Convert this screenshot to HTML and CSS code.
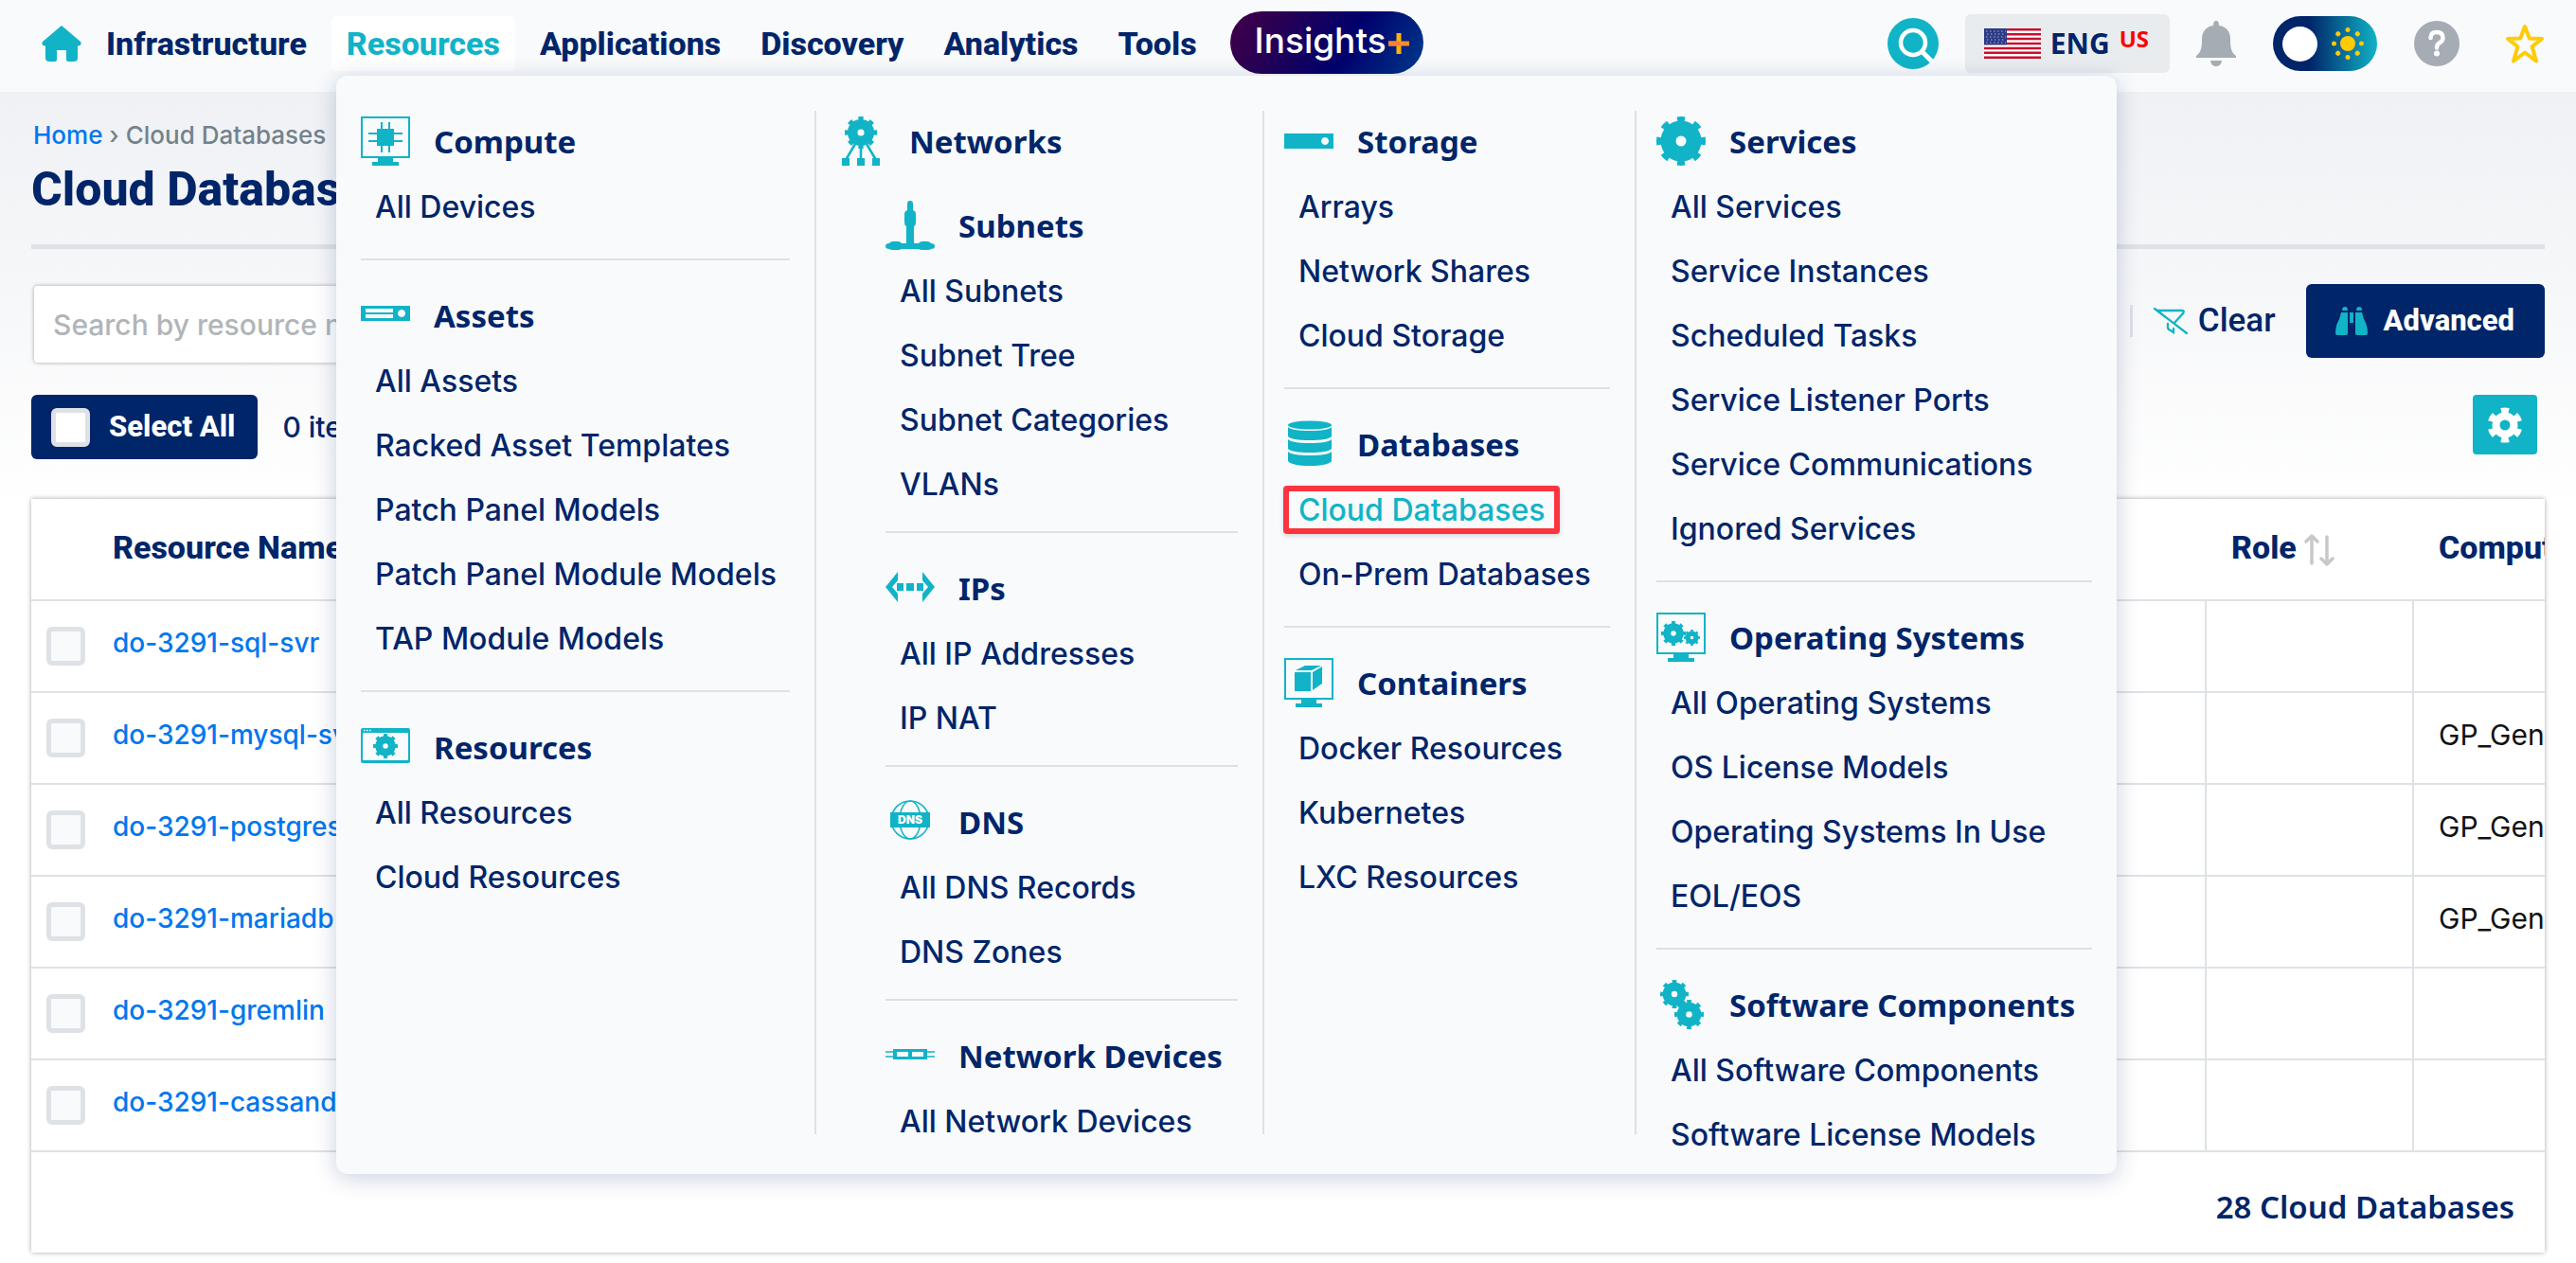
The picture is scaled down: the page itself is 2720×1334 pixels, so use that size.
FILE: index.html
```html
<!DOCTYPE html>
<html lang="en">
<head>
	<meta charset="utf-8">
	<title>Cloud Databases</title>
	<link rel="stylesheet" href="styles.css">
</head>
<body>

	<!-- shared icons -->
	<svg class="sprite" width="0" height="0" aria-hidden="true">
		<symbol id="gear" viewBox="0 0 52 52">
			<circle cx="26" cy="26" r="13.5" fill="none" stroke="currentColor" stroke-width="16"/>
			<circle cx="26" cy="26" r="22.5" fill="none" stroke="currentColor" stroke-width="7" pathLength="16" stroke-dasharray=".9 1.1" stroke-dashoffset=".45"/>
		</symbol>
		<symbol id="screen" viewBox="0 0 52 52">
			<path d="M0 0h52v44H34v4h6v4H12v-4h6v-4H0zM2 2v40h48V2z" fill="currentColor" fill-rule="evenodd"/>
		</symbol>
	</svg>

	<header class="topbar">
		<nav class="main-nav">
			<a class="home" href="#" aria-label="Home">
				<svg width="42" height="38" viewBox="0 0 42 38"><path d="M21 0 41 17q2 4-3 4.500V34q0 4-4 4h-6q-2 0-2-2V26H16v10q0 2-2 2H8q-4 0-4-4V21.500Q-1 21 1 17z" fill="currentColor"/></svg>
			</a>
			<a href="#">Infrastructure</a>
			<a class="active" href="#">Resources</a>
			<a href="#">Applications</a>
			<a href="#">Discovery</a>
			<a href="#">Analytics</a>
			<a href="#">Tools</a>
			<a class="insights" href="#">Insights<svg width="22" height="22" viewBox="0 0 22 22"><path d="M0 11h22" stroke="#ff8a2b" stroke-width="5"/><path d="M11 0v22" stroke="#ffb300" stroke-width="5"/><path d="M0 11h13" stroke="#ff7f3a" stroke-width="5"/></svg></a>
		</nav>
		<div class="tools">
			<button class="icon-btn" aria-label="Search">
				<svg width="54" height="54" viewBox="0 0 54 54"><circle cx="27" cy="27" r="27" fill="#11b3c7"/><circle cx="27" cy="26" r="13" fill="none" stroke="#fff" stroke-width="4.500"/><path d="M36 35l12 12" stroke="#fff" stroke-width="5"/></svg>
			</button>
			<button class="lang">
				<svg width="60" height="32" viewBox="0 0 60 32">
					<path fill="#fff" d="M0 0h60v32H0z"/>
					<path d="M0 1.200h60M0 6.200h60M0 11.100h60M0 16h60M0 20.900h60M0 25.800h60M0 30.800h60" stroke="#c8102e" stroke-width="2.460"/>
					<path fill="#2b3a86" d="M0 0h24v17.300H0z"/>
					<path d="M2 3h21M3 6h20M2 9h21M3 12h20M2 15h21" stroke="#aab2d8" stroke-width="1.200" stroke-dasharray="1.500 2.500"/>
				</svg>
				<span>ENG</span><sup>US</sup>
			</button>
			<button class="icon-btn" aria-label="Notifications">
				<svg width="42" height="48" viewBox="0 0 42 48"><path d="M21 0q3 0 3 5c8 1 12 7 12 14 0 10 1 14 6 18v2H0v-2c5-4 6-8 6-18C6 12 10 6 18 5q0-5 3-5zM15 42h12q-1 6-6 6t-6-6z" fill="#a6acb4"/></svg>
			</button>
			<label class="theme">
				<input type="checkbox" aria-label="Light theme">
				<svg width="34" height="34" viewBox="0 0 34 34"><circle cx="17" cy="17" r="8" fill="#ffcb05"/><circle cx="17" cy="17" r="14.500" fill="none" stroke="#ffcb05" stroke-width="5" stroke-linecap="round" pathLength="80" stroke-dasharray=".1 9.900"/></svg>
			</label>
			<button class="icon-btn" aria-label="Help">
				<svg width="48" height="48" viewBox="0 0 48 48"><circle cx="24" cy="24" r="24" fill="#a6acb4"/><path d="M17.500 18q0-6 6.500-6t6.500 6q0 3.500-4 5.500-2.500 1.300-2.500 5" fill="none" stroke="#fff" stroke-width="4.500" stroke-linecap="round"/><circle cx="24" cy="34.500" r="3" fill="#fff"/></svg>
			</button>
			<button class="icon-btn star" aria-label="Favourite">
				<svg width="42" height="42" viewBox="0 0 42 42"><path d="M21 3l4.800 12.500L39 16 28.600 24.200 33 39.500 21 30.500 9 39.500l4.400-15.300L3 16l13.200-.5z" fill="none" stroke="#ffcb05" stroke-width="4" stroke-linejoin="round"/></svg>
			</button>
		</div>
	</header>

	<main class="page">
		<div class="breadcrumb"><a href="#">Home</a> › <span>Cloud Databases</span></div>
		<h1>Cloud Databases</h1>

		<div class="search-row">
			<input class="search" type="text" placeholder="Search by resource name" aria-label="Search by resource name">
			<button class="clear">
				<svg width="36" height="30" viewBox="0 0 36 30" fill="none" stroke="#11b3c7" stroke-width="2.300" stroke-linecap="round"><path d="M1 2l34 26M4 4h26q3 0 1 3l-9 10M15 18v4q0 2 3 3l3 2v-4"/></svg>
				Clear
			</button>
			<button class="advanced">
				<svg width="34" height="31" viewBox="0 0 34 31" fill="#11b3c7"><path d="M7 4q0-4 3-4t3 4zM22 4q0-4 3-4t3 4zM6 6h7v22q0 2-2 2H2q-2 0-2-2 0-8 4-15zM21 6h7l2 7q4 7 4 15 0 2-2 2h-9q-2 0-2-2zM15 6h4v11h-4z"/></svg>
				Advanced
			</button>
		</div>

		<div class="select-row">
			<label class="select-all"><input type="checkbox">Select All</label>
			<span class="count">0 items</span>
			<button class="settings" aria-label="Table settings">
				<svg width="36" height="38" viewBox="-18 -19 36 38" fill="none" stroke="#fff"><circle r="9.500" stroke-width="8"/><circle r="15" stroke-width="7" pathLength="12" stroke-dasharray="1 1" stroke-dashoffset="3.500"/></svg>
			</button>
		</div>

		<section class="card">
			<table>
				<colgroup>
					<col class="c-check"><col class="c-name"><col><col class="c-role"><col class="c-tier">
				</colgroup>
				<thead>
					<tr>
						<th></th>
						<th class="name">Resource Name</th>
						<th></th>
						<th>Role <svg width="32" height="34" viewBox="0 0 32 34" fill="none" stroke="#c8c8c8" stroke-width="3.500" stroke-linecap="round" stroke-linejoin="round"><path d="M8 31V3M2 8l6-6 6 6M24 3v28M18 26l6 6 6-6"/></svg></th>
						<th>Compute</th>
					</tr>
				</thead>
				<tbody>
					<tr><td><input type="checkbox" aria-label="do-3291-sql-svr"></td><td class="name"><a href="#">do-3291-sql-svr</a></td><td></td><td></td><td></td></tr>
					<tr><td><input type="checkbox" aria-label="do-3291-mysql-svr"></td><td class="name"><a href="#">do-3291-mysql-svr</a></td><td></td><td></td><td>GP_Gen</td></tr>
					<tr><td><input type="checkbox" aria-label="do-3291-postgres"></td><td class="name"><a href="#">do-3291-postgres</a></td><td></td><td></td><td>GP_Gen</td></tr>
					<tr><td><input type="checkbox" aria-label="do-3291-mariadb"></td><td class="name"><a href="#">do-3291-mariadb</a></td><td></td><td></td><td>GP_Gen</td></tr>
					<tr><td><input type="checkbox" aria-label="do-3291-gremlin"></td><td class="name"><a href="#">do-3291-gremlin</a></td><td></td><td></td><td></td></tr>
					<tr><td><input type="checkbox" aria-label="do-3291-cassandra"></td><td class="name"><a href="#">do-3291-cassandra</a></td><td></td><td></td><td></td></tr>
				</tbody>
			</table>
			<div class="total">28 Cloud Databases</div>
		</section>
	</main>

	<div class="mega-menu">
		<div class="column">
			<section>
				<h2><svg viewBox="0 0 52 52"><use href="#screen"/><path d="M18 14h16v16H18zM22 6v32M30 6v32M8 18h36M8 26h36" fill="currentColor" stroke="currentColor" stroke-width="2"/></svg>Compute</h2>
				<ul>
					<li><a href="#">All Devices</a></li>
				</ul>
			</section>
			<section>
				<h2><svg viewBox="0 0 52 52"><path d="M0 16h52v16H0zM5 19v4h29v-4zM5 25v4h29v-4zM43 20a4 4 0 1 0 .1 0z" fill="currentColor" fill-rule="evenodd"/></svg>Assets</h2>
				<ul>
					<li><a href="#">All Assets</a></li>
					<li><a href="#">Racked Asset Templates</a></li>
					<li><a href="#">Patch Panel Models</a></li>
					<li><a href="#">Patch Panel Module Models</a></li>
					<li><a href="#">TAP Module Models</a></li>
				</ul>
			</section>
			<section>
				<h2><svg viewBox="0 0 52 52"><path d="M2 6h48q2 0 2 2v33q0 2-2 2H2q-2 0-2-2V8q0-2 2-2zM2 11v29h48V11z" fill="currentColor" fill-rule="evenodd"/><path d="M3 8.500h8" stroke="#fff" stroke-width="1.500" stroke-dasharray="1.500 1.500"/><use href="#gear" x="13" y="12" width="26" height="26"/></svg>Resources</h2>
				<ul>
					<li><a href="#">All Resources</a></li>
					<li><a href="#">Cloud Resources</a></li>
				</ul>
			</section>
		</div>

		<div class="column">
			<h2><svg viewBox="0 0 52 52"><use href="#gear" x="9" y="0" width="34" height="34"/><path d="M26 32v14M20 29l-10 17M32 29l10 17" stroke="currentColor" stroke-width="2.500"/><path d="M6 44h8v8H6zM22 44h8v8h-8zM38 44h8v8h-8z" fill="currentColor"/></svg>Networks</h2>
			<div class="nested">
				<section>
					<h2><svg viewBox="0 0 52 52"><path d="M23 3q0-3 3-3t3 3v7q3 1 3 4v9q0 3-2 4v18h5q1-2 4-2h5q3 0 4 2 4 0 4 3t-4 3q-1 1-4 1h-5q-3 0-4-1H17q-1 1-4 1H8q-3 0-4-1-4 0-4-3t4-3q1-2 4-2h5q3 0 4 2h5V27q-2-1-2-4v-9q0-3 3-4z" fill="currentColor"/></svg>Subnets</h2>
					<ul>
						<li><a href="#">All Subnets</a></li>
						<li><a href="#">Subnet Tree</a></li>
						<li><a href="#">Subnet Categories</a></li>
						<li><a href="#">VLANs</a></li>
					</ul>
				</section>
				<section>
					<h2><svg viewBox="0 0 52 52"><path d="M13 9v9l-6 7 6 7v9L0 25zM39 9v9l6 7-6 7v9l13-16zM12 21h7v8h-7zM22 21h8v8h-8zM33 21h7v8h-7z" fill="currentColor"/></svg>IPs</h2>
					<ul>
						<li><a href="#">All IP Addresses</a></li>
						<li><a href="#">IP NAT</a></li>
					</ul>
				</section>
				<section>
					<h2><svg viewBox="0 0 52 52"><g fill="none" stroke="currentColor" stroke-width="1.500"><circle cx="26" cy="24" r="20"/><ellipse cx="26" cy="24" rx="11" ry="20"/></g><path d="M5 16h42v16H5z" fill="currentColor"/><text class="dns" x="26" y="28" text-anchor="middle">DNS</text></svg>DNS</h2>
					<ul>
						<li><a href="#">All DNS Records</a></li>
						<li><a href="#">DNS Zones</a></li>
					</ul>
				</section>
				<section>
					<h2><svg viewBox="0 0 52 52"><path d="M8 19h36v11H8zM12 22v5h12v-5zM28 22v5h12v-5z" fill="currentColor" fill-rule="evenodd"/><path d="M0 22h8M0 27h8M44 22h8M44 27h8" stroke="currentColor" stroke-width="1.500"/></svg>Network Devices</h2>
					<ul>
						<li><a href="#">All Network Devices</a></li>
					</ul>
				</section>
			</div>
		</div>

		<div class="column">
			<section>
				<h2><svg viewBox="0 0 52 52"><path d="M0 18h52v16H0zM43 22a4 4 0 1 0 .1 0z" fill="currentColor" fill-rule="evenodd"/></svg>Storage</h2>
				<ul>
					<li><a href="#">Arrays</a></li>
					<li><a href="#">Network Shares</a></li>
					<li><a href="#">Cloud Storage</a></li>
				</ul>
			</section>
			<section>
				<h2><svg viewBox="0 0 52 52"><g fill="currentColor"><ellipse cx="27" cy="6" rx="23" ry="4.500"/><path d="M4 8q4 4 23 4t23-4v10q-4 4-23 4T4 18zM4 21q4 4 23 4t23-4v10q-4 4-23 4T4 31zM4 34q4 4 23 4t23-4v10q-4 5-23 5T4 44z"/></g></svg>Databases</h2>
				<ul>
					<li><a class="current" href="#">Cloud Databases</a></li>
					<li><a href="#">On-Prem Databases</a></li>
				</ul>
			</section>
			<section>
				<h2><svg viewBox="0 0 52 52"><use href="#screen"/><path d="M11 15h17v20H11zM30 15l10-6v18l-10 7zM12 13l10-5h17l-10 5z" fill="currentColor"/></svg>Containers</h2>
				<ul>
					<li><a href="#">Docker Resources</a></li>
					<li><a href="#">Kubernetes</a></li>
					<li><a href="#">LXC Resources</a></li>
				</ul>
			</section>
		</div>

		<div class="column">
			<section>
				<h2><svg viewBox="0 0 52 52"><use href="#gear"/></svg>Services</h2>
				<ul>
					<li><a href="#">All Services</a></li>
					<li><a href="#">Service Instances</a></li>
					<li><a href="#">Scheduled Tasks</a></li>
					<li><a href="#">Service Listener Ports</a></li>
					<li><a href="#">Service Communications</a></li>
					<li><a href="#">Ignored Services</a></li>
				</ul>
			</section>
			<section>
				<h2><svg viewBox="0 0 52 52"><use href="#screen"/><use href="#gear" x="5" y="9" width="26" height="26"/><use href="#gear" x="29" y="18" width="17" height="17"/></svg>Operating Systems</h2>
				<ul>
					<li><a href="#">All Operating Systems</a></li>
					<li><a href="#">OS License Models</a></li>
					<li><a href="#">Operating Systems In Use</a></li>
					<li><a href="#">EOL/EOS</a></li>
				</ul>
			</section>
			<section>
				<h2><svg viewBox="0 0 52 52"><use href="#gear" x="4" y="0" width="30" height="30"/><use href="#gear" x="19" y="21" width="31" height="31"/></svg>Software Components</h2>
				<ul>
					<li><a href="#">All Software Components</a></li>
					<li><a href="#">Software License Models</a></li>
				</ul>
			</section>
		</div>
	</div>

</body>
</html>
```
FILE: styles.css
```css
* {
	box-sizing: border-box;
}
body {
	margin: 0;
	min-height: 100vh;
	background: #fff linear-gradient(#eff1f4 97px, #f6f7f9 300px, #fff 540px);
	color: #002569;
	font-family: Inter, "Open Sans", sans-serif;
	font-weight: 500;
	font-size: 28px;
	overflow-x: hidden;
}
a {
	color: inherit;
	text-decoration: none;
}
button {
	border: 0;
	padding: 0;
	background: none;
	color: inherit;
	font: inherit;
	cursor: pointer;
}
svg {
	display: block;
}
.sprite {
	position: absolute;
}

/* top bar */
.topbar {
	display: flex;
	align-items: center;
	justify-content: space-between;
	height: 97px;
	padding: 0 33px 5px 28px;
	background: #f8fafc;
}
.main-nav {
	display: flex;
	align-items: center;
	gap: 10px;
	font: 800 34px/58px Roboto, sans-serif;
}
.main-nav a {
	padding: 0 16px;
	border-radius: 6px;
}
.main-nav .home {
	padding-right: 0;
	color: #11b3c7;
}
.main-nav .active {
	background: #fff;
	color: #11b3c7;
}
.main-nav .insights {
	display: flex;
	align-items: center;
	gap: 2px;
	margin: 0 0 2px 9px;
	padding: 0 15px 4px 26px;
	border-radius: 33px;
	background: linear-gradient(120deg, #430045, #00006c 60%, #003a8c);
	color: #fff;
	font: 500 37px/62px Inter, sans-serif;
}
.insights svg {
	margin-top: 6px;
}
.tools {
	display: flex;
	align-items: center;
	gap: 28px;
}
.lang {
	display: flex;
	align-items: center;
	gap: 10px;
	height: 62px;
	padding: 0 22px 0 20px;
	border-radius: 6px;
	background: #e9ecef;
	font: 700 30px/40px "Noto Sans", sans-serif;
}
.lang sup {
	margin-top: -10px;
	color: #f00;
	font-size: 24px;
	line-height: 30px;
}
.theme {
	display: block;
	position: relative;
	margin: 0 11px;
}
.theme input {
	appearance: none;
	display: block;
	width: 110px;
	height: 58px;
	margin: 0;
	padding: 11px 10px;
	border-radius: 29px;
	background: linear-gradient(90deg, #002569 35%, #11b3c7);
}
.theme input::before {
	content: "";
	display: block;
	width: 37px;
	height: 37px;
	border-radius: 50%;
	background: #fff;
}
.theme svg {
	position: absolute;
	top: 12px;
	right: 14px;
}
.star {
	margin-left: 20px;
}

/* page */
.page {
	padding: 26px 33px 10px;
}
.breadcrumb {
	padding-left: 2px;
	color: #73828c;
	font-size: 26px;
	line-height: 40px;
}
.breadcrumb a {
	color: #0077ee;
}
h1 {
	margin: 7px 0 37px;
	padding-bottom: 28px;
	border-bottom: 5px solid #dee2e6;
	font: 800 50px/60px Roboto, sans-serif;
}
.search-row {
	display: flex;
	align-items: flex-start;
}
.select-row {
	display: flex;
	align-items: center;
}
.search {
	width: 40%;
	height: 81px;
	margin: 2px 0 0 3px;
	padding: 0 20px;
	border: 0;
	border-radius: 4px;
	background: #fff;
	box-shadow: 0 0 4px rgba(0, 0, 0, .35);
	font: 500 30px/40px Inter, sans-serif;
}
.search::placeholder {
	color: #b0b5b9;
}
.clear {
	display: flex;
	align-items: center;
	gap: 11px;
	height: 34px;
	margin: 22px 0 0 auto;
	padding-left: 22px;
	border-left: 3px solid #dee2e6;
	font: 500 35px/40px Roboto, sans-serif;
}
.advanced {
	display: flex;
	align-items: center;
	gap: 17px;
	height: 78px;
	margin-left: 32px;
	padding: 0 32px 0 31px;
	border-radius: 6px;
	background: #002569;
	color: #fff;
	font: 800 31px/40px Roboto, sans-serif;
}
.select-row {
	margin: 34px 0 42px;
}
.select-all {
	display: flex;
	align-items: center;
	gap: 20px;
	height: 68px;
	padding: 0 24px 0 21px;
	border-radius: 6px;
	background: #002569;
	color: #fff;
	font: 800 31px/40px Roboto, sans-serif;
}
input[type=checkbox] {
	cursor: pointer;
}
.select-all input,
td input {
	appearance: none;
	display: block;
	width: 41px;
	height: 41px;
	margin: 0;
	border: 5px solid #dee2e6;
	border-radius: 6px;
	background: #f8fafc;
}
.select-all input {
	background: #fff;
}
.count {
	margin-left: 26px;
	font-size: 30px;
}
.settings {
	display: flex;
	align-items: center;
	align-self: flex-start;
	justify-content: center;
	width: 68px;
	height: 63px;
	margin: 0 8px 0 auto;
	border-radius: 4px;
	background: #11b3c7;
}

/* table */
.card {
	overflow: hidden;
	background: #fff;
	box-shadow: 0 0 5px rgba(0, 0, 0, .35);
}
table {
	width: 100%;
	table-layout: fixed;
	border-collapse: separate;
	border-spacing: 0;
}
.c-check {
	width: 66px;
}
.c-name {
	width: 500px;
}
.c-role {
	width: 219px;
}
.c-tier {
	width: 138px;
}
th,
td {
	height: 97px;
	padding: 0 0 8px 26px;
	border-bottom: 2px solid #dee2e6;
	text-align: left;
	white-space: nowrap;
}
th {
	height: 108px;
	padding-bottom: 4px;
	font: 800 34px/40px Roboto, sans-serif;
}
th svg {
	display: inline-block;
	vertical-align: middle;
}
td {
	color: #111;
}
td:first-child {
	padding: 0 0 0 16px;
}
td:nth-child(n+3) {
	border-right: 2px solid #dee2e6;
}
td:last-child {
	border-right: 0;
	font-size: 30px;
	font-weight: 400;
}
td a {
	color: #0077ee;
}
th.name,
td.name {
	padding-left: 20px;
}
.total {
	padding: 34px 32px 24px;
	font: 600 33px/48px "Noto Sans", sans-serif;
	text-align: right;
}

/* resources menu */
.mega-menu {
	position: absolute;
	top: 80px;
	left: 355px;
	display: grid;
	grid-template-columns: 507px 473px 393px 507px;
	padding: 37px 0 7px;
	border-radius: 12px;
	background: #f8fafc;
	box-shadow: 0 4px 24px rgba(0, 37, 105, .22);
}
.column {
	margin-bottom: 35px;
	padding: 0 26px 0 21px;
	border-right: 2px solid #dee0e8;
}
.column:first-child {
	padding-left: 26px;
}
.column:last-child {
	margin-bottom: 0;
	border-right: 0;
}
.nested {
	margin: 21px 0 -21px;
	padding-left: 52px;
}
.mega-menu section + section {
	margin-top: 20px;
	padding-top: 26px;
	border-top: 2px solid #dee0e8;
}
.mega-menu .nested section + section {
	margin-top: 15px;
}
.mega-menu h2 {
	display: flex;
	align-items: center;
	gap: 25px;
	height: 68px;
	margin: 0;
	padding-bottom: 2px;
	font: 700 33px/66px "Noto Sans", sans-serif;
	white-space: nowrap;
}
.mega-menu h2 svg {
	flex: none;
	width: 52px;
	height: 52px;
	margin-bottom: 2px;
	color: #11b3c7;
}
.dns {
	fill: #fff;
	font: 900 12px Inter, sans-serif;
}
.mega-menu ul {
	margin: 0;
	padding: 0 0 0 15px;
	list-style: none;
}
.mega-menu li {
	height: 68px;
	font-size: 32px;
	line-height: 68px;
	white-space: nowrap;
}
.mega-menu .current {
	position: relative;
	color: #11b3c7;
}
.current::after {
	content: "";
	position: absolute;
	inset: -6px -16px;
	border: 6px solid #fb3440;
	border-radius: 4px;
	box-shadow: 0 2px 5px rgba(0, 0, 0, .15);
}
```
